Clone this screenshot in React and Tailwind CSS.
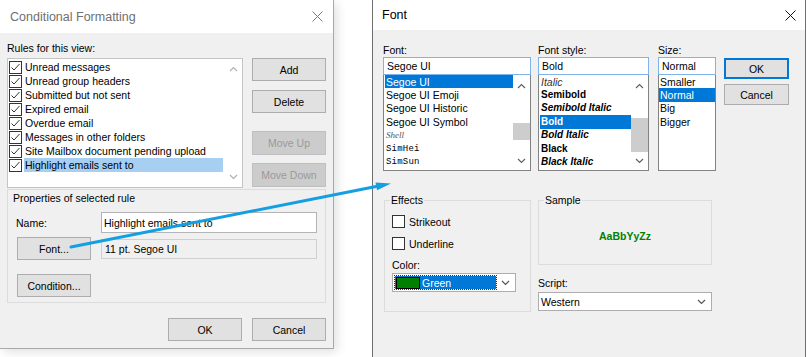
const rules = [
  "Unread messages",
  "Unread group headers",
  "Submitted but not sent",
  "Expired email",
  "Overdue email",
  "Messages in other folders",
  "Site Mailbox document pending upload",
  "Highlight emails sent to",
];

const fontItems = [
  { label: "Segoe UI" },
  { label: "Segoe UI Emoji" },
  { label: "Segoe UI Historic" },
  { label: "Segoe UI Symbol" },
  { label: "Shell", cls: "font-['Liberation_Serif',serif] italic text-[9px] text-[#555]" },
  { label: "SimHei", cls: "font-['Liberation_Mono',monospace] text-[9px] tracking-[0.2px]" },
  { label: "SimSun", cls: "font-['Liberation_Mono',monospace] text-[9px] tracking-[0.2px]" },
];

const styleItems = [
  { label: "Italic", cls: "italic text-[#333]" },
  { label: "Semibold", cls: "font-semibold text-[10px]" },
  { label: "Semibold Italic", cls: "font-semibold italic text-[10px]" },
  { label: "Bold", cls: "font-bold text-[10px]" },
  { label: "Bold Italic", cls: "font-bold italic text-[10px]" },
  { label: "Black", cls: "font-black text-[10px]" },
  { label: "Black Italic", cls: "font-black italic text-[10px]" },
];

const sizeItems = [{ label: "Smaller" }, { label: "Normal" }, { label: "Big" }, { label: "Bigger" }];

function Chevron({ up, color = "#606060" }) {
  return (
    <svg width="9" height="6" viewBox="0 0 9 6" fill="none" stroke={color} strokeWidth="1.2">
      <path d={up ? "M1 5 L4.5 1.5 L8 5" : "M1 1 L4.5 4.5 L8 1"} />
    </svg>
  );
}

function CloseX({ color }) {
  return (
    <svg width="11" height="11" viewBox="0 0 11 11" fill="none" stroke={color} strokeWidth="1">
      <path d="M0.5 0.5 L10.5 10.5 M10.5 0.5 L0.5 10.5" />
    </svg>
  );
}

function RuleCheck() {
  return (
    <span className="flex h-[13px] w-[13px] items-center justify-center border border-[#333] bg-white">
      <svg width="11" height="11" viewBox="0 0 11 11" fill="none" stroke="#333" strokeWidth="1">
        <path d="M1.5 5.5 L4 8 L9.5 2" />
      </svg>
    </span>
  );
}

function Btn({ children, disabled, className = "" }) {
  return (
    <div
      className={`flex w-[74px] items-center justify-center border ${
        disabled ? "border-[#bfbfbf] bg-[#cccccc] text-[#9a9a9a]" : "border-[#adadad] bg-[#e1e1e1] text-black"
      } ${className}`}
    >
      {children}
    </div>
  );
}

function ConditionalDialog() {
  return (
    <section className="absolute left-0 top-0 flex h-[349px] w-[334px] flex-col border-b border-r border-[#a9a9a9] bg-[#f0f0f0] shadow-[3px_3px_10px_rgba(0,0,0,0.12)]">
      <header className="flex h-[33px] shrink-0 items-center justify-between bg-white px-[10px]">
        <span className="text-[12.5px] text-[#707070]">Conditional Formatting</span>
        <CloseX color="#7a7a7a" />
      </header>
      <div className="flex flex-col px-[7px]">
        <div className="mt-[8px] h-[14px] leading-[14px]">Rules for this view:</div>
        <div className="mt-[3px] flex gap-[9px]">
          <div className="flex h-[130px] w-[236px] border border-[#c4c4c4] bg-white">
            <div className="flex-1 pt-[1px]">
              {rules.map((r, i) => (
                <div key={r} className="flex h-[14px] items-center">
                  <span className="ml-[1px]">
                    <RuleCheck />
                  </span>
                  <span
                    className={`ml-[2px] flex h-[14px] w-[199px] items-center pl-[1px] ${i === 7 ? "bg-[#a6cff2]" : ""}`}
                  >
                    {r}
                  </span>
                </div>
              ))}
            </div>
            <div className="flex w-[17px] flex-col items-center justify-between py-[7px]">
              <Chevron up color="#b0b0b0" />
              <Chevron color="#b0b0b0" />
            </div>
          </div>
          <div className="flex w-[74px] flex-col">
            <Btn className="h-[23px]">Add</Btn>
            <Btn className="mt-[9px] h-[23px]">Delete</Btn>
            <Btn disabled className="mt-[18px] h-[24px]">Move Up</Btn>
            <Btn disabled className="mt-[8px] h-[24px]">Move Down</Btn>
          </div>
        </div>

        <div className="mt-[1px] flex h-[114px] flex-col border border-[#dcdcdc]">
          <div className="ml-[5px] mt-[1px] h-[14px] leading-[14px]">Properties of selected rule</div>
          <div className="mt-[7px] flex h-[21px] items-center">
            <span className="ml-[8px] w-[85px]">Name:</span>
            <div className="flex h-[21px] w-[216px] items-center border border-[#b4b4b4] bg-white pl-[2px]">
              Highlight emails sent to
            </div>
          </div>
          <div className="mt-[4px] flex items-center">
            <Btn className="ml-[9px] h-[23px]">Font...</Btn>
            <div className="ml-[10px] flex h-[20px] w-[216px] items-center border border-[#cfcfcf] bg-[#f0f0f0] pl-[3px]">
              11 pt. Segoe UI
            </div>
          </div>
          <Btn className="ml-[9px] mt-[14px] h-[23px]">Condition...</Btn>
        </div>

        <div className="mt-[15px] flex justify-end gap-[10px]">
          <Btn className="h-[23px]">OK</Btn>
          <Btn className="h-[23px]">Cancel</Btn>
        </div>
      </div>
    </section>
  );
}

function Scrollbar({ thumbClass }) {
  return (
    <div className="flex w-[17px] flex-col bg-white">
      <div className="flex h-[21px] items-center justify-center">
        <Chevron up />
      </div>
      <div className="flex-1">
        <div className={`w-[17px] bg-[#cdcdcd] ${thumbClass}`} />
      </div>
      <div className="flex h-[18px] items-center justify-center">
        <Chevron />
      </div>
    </div>
  );
}

function ListColumn({ label, value, items, selected, className, itemPad, scroll, thumbClass }) {
  return (
    <div className={`flex flex-col ${className}`}>
      <div className="mt-[13px] h-[14px] leading-[14px]">{label}</div>
      <div className="flex h-[18px] items-center border border-[#7eb4ea] bg-white pl-[3px]">{value}</div>
      <div className="flex h-[96px] border-x border-b border-[#828282] bg-white">
        <div className={`flex-1 ${itemPad}`}>
          {items.map((it, i) => (
            <div
              key={it.label}
              className={`flex h-[13.4px] items-center pl-[1px] ${i === selected ? "bg-[#0078d7] text-white" : ""} ${it.cls || ""}`}
            >
              {it.label}
            </div>
          ))}
        </div>
        {scroll && <Scrollbar thumbClass={thumbClass} />}
      </div>
    </div>
  );
}

function CheckBox({ label, className }) {
  return (
    <div className={`flex h-[13px] items-center gap-[4px] ${className}`}>
      <span className="h-[13px] w-[13px] border border-[#333] bg-white" />
      <span>{label}</span>
    </div>
  );
}

function FontDialog() {
  return (
    <section className="absolute left-[372px] top-0 flex h-[357px] w-[434px] flex-col border-x border-[#6f6f6f] bg-[#f0f0f0]">
      <header className="flex h-[30px] shrink-0 items-center justify-between bg-white px-[9px]">
        <span className="text-[12.5px]">Font</span>
        <CloseX color="#111" />
      </header>
      <div className="flex flex-col pl-[10px]">
        <div className="flex">
          <ListColumn
            label="Font:"
            value="Segoe UI"
            items={fontItems}
            selected={0}
            className="w-[148px]"
            itemPad="pl-[1px]"
            scroll
            thumbClass="mt-[27px] h-[17px]"
          />
          <ListColumn
            label="Font style:"
            value="Bold"
            items={styleItems}
            selected={3}
            className="ml-[7px] w-[111px]"
            itemPad="pl-[1px]"
            scroll
            thumbClass="mt-[22px] h-[34px]"
          />
          <ListColumn
            label="Size:"
            value="Normal"
            items={sizeItems}
            selected={1}
            className="ml-[9px] w-[58px]"
            itemPad="pl-0"
          />
          <div className="ml-[8px] flex w-[65px] flex-col pt-[28px]">
            <div className="flex h-[21px] items-center justify-center border border-[#0078d7] bg-[#e1e1e1] shadow-[inset_0_0_0_1px_#0078d7]">
              OK
            </div>
            <div className="mt-[5px] flex h-[21px] items-center justify-center border border-[#adadad] bg-[#e1e1e1]">
              Cancel
            </div>
          </div>
        </div>

        <div className="mt-[22px] flex">
          <fieldset className="ml-[1px] h-[119px] w-[147px] border border-[#dcdcdc]">
            <legend className="ml-[5px] px-[1px] leading-[14px]">Effects</legend>
            <div className="flex flex-col pl-[7px] pt-[8px]">
              <CheckBox label="Strikeout" />
              <CheckBox label="Underline" className="mt-[9px]" />
              <div className="mt-[8px] h-[14px] leading-[14px]">Color:</div>
              <div className="mt-[1px] flex h-[19px] w-[124px] items-center border border-[#adadad] bg-white pl-[2px]">
                <div className="flex h-[13px] w-[101px] items-center bg-[#0078d7] outline-1 outline-dotted outline-[#333]">
                  <span className="ml-[1px] h-[12px] w-[24px] border border-black bg-[#008000]" />
                  <span className="ml-[2px] text-white">Green</span>
                </div>
                <div className="flex flex-1 justify-center">
                  <Chevron color="#555" />
                </div>
              </div>
            </div>
          </fieldset>

          <div className="ml-[7px] flex w-[174px] flex-col">
            <fieldset className="h-[72px] border border-[#dcdcdc]">
              <legend className="ml-[5px] px-[1px] leading-[14px]">Sample</legend>
              <div className="flex h-[57px] items-center justify-center text-[10.5px] font-bold text-[#008000]">
                AaBbYyZz
              </div>
            </fieldset>
            <div className="mt-[11px] h-[14px] leading-[14px]">Script:</div>
            <div className="mt-[2px] flex h-[19px] items-center justify-between border border-[#adadad] bg-white pl-[2px] pr-[5px]">
              <span>Western</span>
              <Chevron color="#555" />
            </div>
          </div>
        </div>
      </div>
    </section>
  );
}

export default function App() {
  return (
    <div className="relative h-[357px] w-[807px] overflow-hidden bg-white font-['Liberation_Sans',Arial,sans-serif] text-[10.5px] leading-[14px] text-black">
      <ConditionalDialog />
      <FontDialog />
      <svg className="pointer-events-none absolute left-0 top-0" width="807" height="357">
        <line x1="71" y1="247" x2="376" y2="186.5" stroke="#149fe3" strokeWidth="3" strokeLinecap="round" />
        <polygon points="391,183.5 375.5,182.5 377.1,190.3" fill="#149fe3" />
      </svg>
    </div>
  );
}
